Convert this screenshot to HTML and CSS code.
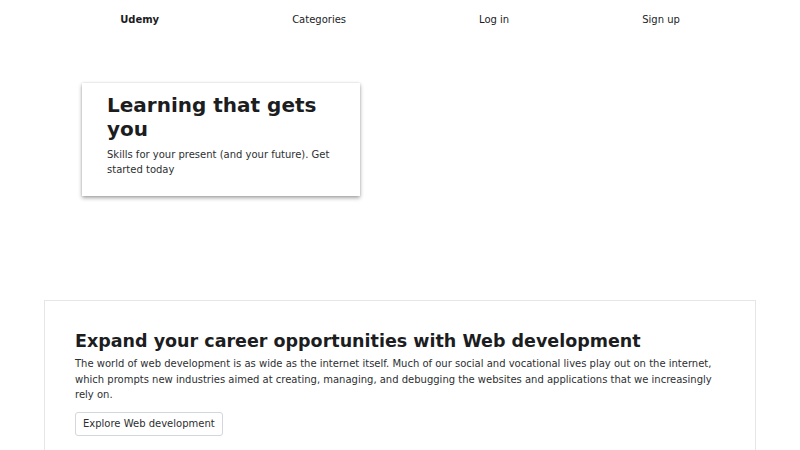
FILE: index.html
```html
<!DOCTYPE html>
<html lang="en">
<head>
<meta charset="utf-8">
<title>Udemy</title>
<link rel="stylesheet" href="styles.css">
</head>
<body>
<nav class="nav">
  <a class="nav-item brand" href="#">Udemy</a>
  <a class="nav-item" href="#">Categories</a>
  <a class="nav-item" href="#">Log in</a>
  <a class="nav-item" href="#">Sign up</a>
</nav>
<section class="hero">
  <div class="billboard">
    <h1 class="billboard-title">Learning that gets you</h1>
    <p class="billboard-text">Skills for your present (and your future). Get started today</p>
  </div>
</section>
<section class="topic">
  <h2 class="topic-title">Expand your career opportunities with Web development</h2>
  <p class="topic-text">The world of web development is as wide as the internet itself. Much of our social and vocational lives play out on the internet, which prompts new industries aimed at creating, managing, and debugging the websites and applications that we increasingly rely on.</p>
  <a class="topic-btn" href="#">Explore Web development</a>
</section>
</body>
</html>
```
FILE: styles.css
```css
* { box-sizing: border-box; }
html, body { margin: 0; padding: 0; background: #fff; }
body {
  font-family: "DejaVu Sans", sans-serif;
  color: #1c1d1f;
  font-size: 10px;
}
a { color: inherit; text-decoration: none; }
.nav {
  display: flex;
  justify-content: center;
  gap: 133px;
  height: 38px;
  padding-top: 2px;
  align-items: center;
}
.nav-item {
  font-size: 10px;
  line-height: 14px;
}
.brand { font-weight: bold; }
.hero {
  padding: 45px 0 0 82px;
  height: 262px;
}
.billboard {
  width: 278px;
  padding: 10px 16px 19px 25px;
  background: #fff;
  box-shadow: 0 2px 4px rgba(0, 0, 0, 0.35), 0 0 2px rgba(0, 0, 0, 0.12);
}
.billboard-title {
  margin: 0 0 6px;
  font-size: 20px;
  line-height: 24px;
  font-weight: bold;
}
.billboard-text {
  margin: 0;
  font-size: 10px;
  line-height: 15px;
  color: #2d2f31;
}
.topic {
  margin: 0 44px;
  border: 1px solid #e6e6e6;
  border-bottom: none;
  padding: 29px 30px 20px;
  height: 150px;
}
.topic-title {
  margin: 0 0 4px;
  font-size: 17.5px;
  line-height: 22px;
  font-weight: bold;
}
.topic-text {
  margin: 0 0 9px;
  font-size: 10px;
  line-height: 15.5px;
  color: #2d2f31;
}
.topic-btn {
  display: inline-block;
  font-size: 10px;
  line-height: 14px;
  padding: 4px 7px;
  border: 1px solid #d1d7dc;
  border-radius: 3px;
  color: #2d2f31;
}
```
